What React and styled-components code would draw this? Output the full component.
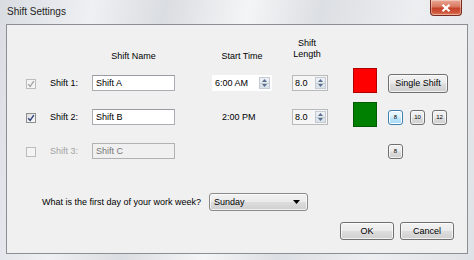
import React from 'react';
import styled, { createGlobalStyle, css } from 'styled-components';

const Global = createGlobalStyle`
  html, body { margin: 0; padding: 0; }
  body {
    width: 474px; height: 260px; overflow: hidden;
    font-family: "Liberation Sans", Arial, sans-serif;
    font-size: 9px; color: #000;
  }
`;

const Window = styled.div`
  width: 474px; height: 260px; box-sizing: border-box;
  display: flex; flex-direction: column;
  padding: 0 6px 6px 6px;
  background: linear-gradient(100deg, #d9dde2 0%, #eef0f3 18%, #dadde1 32%, #f4f5f6 48%, #dcdfe3 62%, #eceef0 80%, #dfe2e6 100%);
`;

const TitleBar = styled.div`
  height: 24px; flex: none;
  display: flex; justify-content: space-between; align-items: flex-start;
`;

const Title = styled.div`
  margin: 6px 0 0 1px;
  font-size: 10px; color: #1e1e1e; line-height: 12px;
`;

const CloseButton = styled.div`
  width: 32px; height: 16px; box-sizing: border-box; margin-right: 6px;
  border: 1px solid #7a2a1e; border-top: none; border-radius: 0 0 4px 4px;
  background: linear-gradient(#e9a895 0%, #d9775f 45%, #c5432a 55%, #d0583c 85%, #e08a6c 100%);
  display: flex; align-items: center; justify-content: center;
  box-shadow: inset 0 0 0 1px rgba(255,255,255,0.35);
`;

const Client = styled.div`
  flex: 1; box-sizing: border-box;
  border: 1px solid #8b8e92; background: #f0f0f0;
  display: flex; flex-direction: column;
  padding: 12px 13px 12px 19px;
`;

const Table = styled.div`
  display: grid;
  grid-template-columns: 24px 42px 120px 80px 61px 35px 60px;
  grid-template-rows: 29px 34px 34px 34px;
  align-items: center;
`;

const Header = styled.div`
  align-self: end;
  width: ${p => p.$w}px; text-align: center; line-height: ${p => p.$lh || 12}px;
  margin-bottom: ${p => p.$mb || 4}px;
`;

const CheckBoxBox = styled.div`
  width: 10px; height: 10px; box-sizing: border-box;
  border: 1px solid ${p => (p.$disabled ? '#bcbcbc' : '#8e8f8f')};
  background: ${p => (p.$disabled ? '#f4f4f4' : 'linear-gradient(135deg, #dcdcdc, #fbfbfb)')};
  display: flex; align-items: center; justify-content: center;
  margin-top: 1px;
`;

const Label = styled.div`
  color: ${p => (p.$disabled ? '#a3a3a3' : '#000')};
  line-height: 12px; white-space: nowrap;
  ${p => p.$pad && css`padding-left: ${p.$pad}px;`}
`;

const TextBox = styled.div`
  width: 83px; height: 16px; box-sizing: border-box;
  border: 1px solid ${p => (p.$disabled ? '#b2b2b2' : '#abadb3')};
  border-top-color: ${p => (p.$disabled ? '#b2b2b2' : '#9a9ca3')};
  background: ${p => (p.$disabled ? '#f0f0f0' : '#fff')};
  color: ${p => (p.$disabled ? '#777' : '#000')};
  padding-left: 3px; line-height: 14px;
`;

const SpinField = styled.div`
  width: ${p => p.$w}px; height: 16px; box-sizing: border-box;
  display: flex; align-items: center; justify-content: space-between;
  background: ${p => (p.$plain ? '#fff' : '#f6f6f6')};
  border: 1px solid ${p => (p.$plain ? '#fff' : '#b9b9b9')};
  padding-left: 2px; padding-right: 1px;
  line-height: 14px;
`;

const Spinner = styled.div`
  width: 11px; height: 12px; display: flex; flex-direction: column; gap: 0;
  border: 1px solid #c5cbd3; box-sizing: border-box;
  background: linear-gradient(#eef2f7, #d9e0e8);
`;

const SpinHalf = styled.div`
  flex: 1; display: flex; align-items: center; justify-content: center;
  ${p => p.$top && css`border-bottom: 1px solid #c5cbd3;`}
`;

const Swatch = styled.div`
  width: 24px; height: 25px; box-sizing: border-box;
  background: ${p => p.$color};
  border: 1px solid ${p => p.$border};
  align-self: start; margin-top: 2px;
`;

const buttonBase = css`
  box-sizing: border-box;
  border: 1px solid #707070; border-radius: 3px;
  background: linear-gradient(#f2f2f2 0%, #ebebeb 48%, #dddddd 52%, #cfcfcf 100%);
  box-shadow: inset 0 0 0 1px rgba(255,255,255,0.7);
  display: flex; align-items: center; justify-content: center;
  color: #000; line-height: 12px;
`;

const Button = styled.div`
  ${buttonBase};
  width: ${p => p.$w}px; height: ${p => p.$h}px;
`;

const SmallButton = styled.div`
  ${buttonBase};
  width: 15px; height: 15px; font-size: 6px;
  ${p => p.$focus && css`
    border-color: #3c7fb1;
    background: linear-gradient(#eaf6fd 0%, #d9f0fc 48%, #bee6fd 52%, #a7d9f5 100%);
    box-shadow: inset 0 0 0 1px #fff;
  `}
`;

const SmallRow = styled.div`
  display: flex; gap: 7px; align-items: center;
`;

const QuestionRow = styled.div`
  display: flex; align-items: center; gap: 8px;
  margin-top: 25px; padding-left: 16px;
`;

const Dropdown = styled.div`
  ${buttonBase};
  width: 99px; height: 18px; justify-content: space-between;
  padding: 0 7px 0 4px;
  border-color: #8a8a8a;
`;

const ButtonRow = styled.div`
  display: flex; justify-content: flex-end; gap: 6px; margin-top: 11px;
`;

const Arrow = ({ up }) => (
  <svg width="5" height="3" viewBox="0 0 5 3">
    <path d={up ? 'M0 3 L2.5 0 L5 3 Z' : 'M0 0 L2.5 3 L5 0 Z'} fill="#5a6e8e" />
  </svg>
);

const Spin = () => (
  <Spinner>
    <SpinHalf $top><Arrow up /></SpinHalf>
    <SpinHalf><Arrow /></SpinHalf>
  </Spinner>
);

const Check = ({ color }) => (
  <svg width="8" height="8" viewBox="0 0 8 8">
    <path d="M1.2 4.2 L3.2 6.4 L6.8 1.2" fill="none" stroke={color} strokeWidth="1.4" />
  </svg>
);

const CheckBox = ({ checked, disabled }) => (
  <CheckBoxBox $disabled={disabled}>
    {checked && <Check color={disabled ? '#a8a8a8' : '#2b3f7a'} />}
  </CheckBoxBox>
);

const rows = [
  { n: 1, name: 'Shift A', checked: true, cbDisabled: true },
  { n: 2, name: 'Shift B', checked: true },
  { n: 3, name: 'Shift C', disabled: true, cbDisabled: true },
];

export default function App() {
  return (
    <>
      <Global />
      <Window>
        <TitleBar>
          <Title>Shift Settings</Title>
          <CloseButton>
            <svg width="10" height="8" viewBox="0 0 10 8">
              <path d="M1.5 0.8 L8.5 7.2 M8.5 0.8 L1.5 7.2" stroke="#fff" strokeWidth="2.2" />
            </svg>
          </CloseButton>
        </TitleBar>
        <Client>
          <Table>
            <div />
            <div />
            <Header $w={83}>Shift Name</Header>
            <Header $w={60}>Start Time</Header>
            <Header $w={30} $lh={11} $mb={6}>Shift<br />Length</Header>
            <div />
            <div />

            {rows.map(r => (
              <React.Fragment key={r.n}>
                <CheckBox checked={r.checked} disabled={r.cbDisabled} />
                <Label $disabled={r.disabled}>Shift {r.n}:</Label>
                <TextBox $disabled={r.disabled}>{r.name}</TextBox>
                {r.n === 1 && (
                  <>
                    <SpinField $w={60} $plain>6:00 AM<Spin /></SpinField>
                    <SpinField $w={36}>8.0<Spin /></SpinField>
                    <Swatch $color="#ff0000" $border="#b00000" />
                    <Button $w={60} $h={19}>Single Shift</Button>
                  </>
                )}
                {r.n === 2 && (
                  <>
                    <Label $pad={10}>2:00 PM</Label>
                    <SpinField $w={36}>8.0<Spin /></SpinField>
                    <Swatch $color="#008000" $border="#005a00" />
                    <SmallRow>
                      <SmallButton $focus>8</SmallButton>
                      <SmallButton>10</SmallButton>
                      <SmallButton>12</SmallButton>
                    </SmallRow>
                  </>
                )}
                {r.n === 3 && (
                  <>
                    <div />
                    <div />
                    <div />
                    <SmallButton>8</SmallButton>
                  </>
                )}
              </React.Fragment>
            ))}
          </Table>
          <QuestionRow>
            <Label>What is the first day of your work week?</Label>
            <Dropdown>
              <span>Sunday</span>
              <svg width="7" height="4" viewBox="0 0 7 4"><path d="M0 0 L7 0 L3.5 4 Z" fill="#000" /></svg>
            </Dropdown>
          </QuestionRow>
          <ButtonRow>
            <Button $w={54} $h={18}>OK</Button>
            <Button $w={54} $h={18}>Cancel</Button>
          </ButtonRow>
        </Client>
      </Window>
    </>
  );
}
